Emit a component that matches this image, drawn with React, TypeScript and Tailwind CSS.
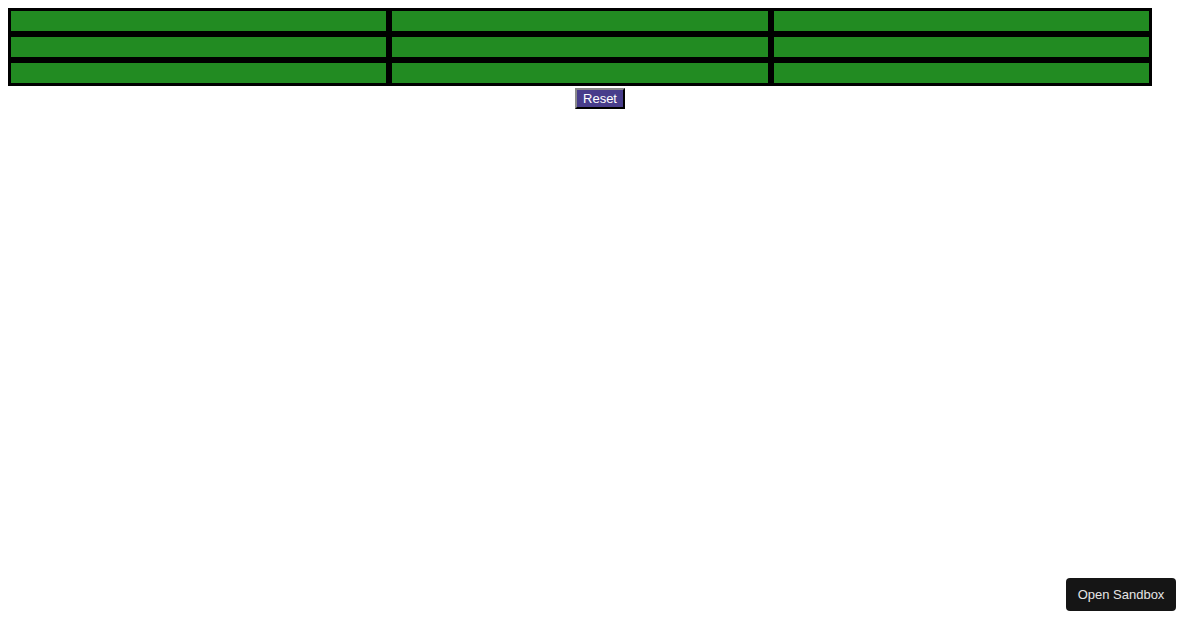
import { useState } from "react";

const cells = Array.from({ length: 9 }, (_, i) => i);

export default function App() {
    const [, setTick] = useState(0);

    return (
        <div className="min-h-screen bg-white p-2" style={{ fontFamily: '"Liberation Sans", Arial, sans-serif' }}>
            {/* Board */}
            <div className="grid w-[1144px] grid-cols-3">
                {cells.map(i => (
                    <div key={i} className="h-[26px] border-[3px] border-black bg-[#228b22]" />
                ))}
            </div>

            <div className="flex justify-center pt-[2px]">
                <button
                    type="button"
                    onClick={() => setTick(t => t + 1)}
                    className="h-[21px] w-[50px] border-2 border-t-[#8a8a8a] border-l-[#8a8a8a] border-r-black border-b-black bg-[#483d8b] text-[13px] leading-none text-white"
                >
                    Reset
                </button>
            </div>

            <button
                type="button"
                className="fixed right-[24px] bottom-[19px] h-[33px] w-[110px] rounded-[4px] bg-[#151515] text-[13px] text-[#e5e5e5]"
            >
                Open Sandbox
            </button>
        </div>
    );
}
